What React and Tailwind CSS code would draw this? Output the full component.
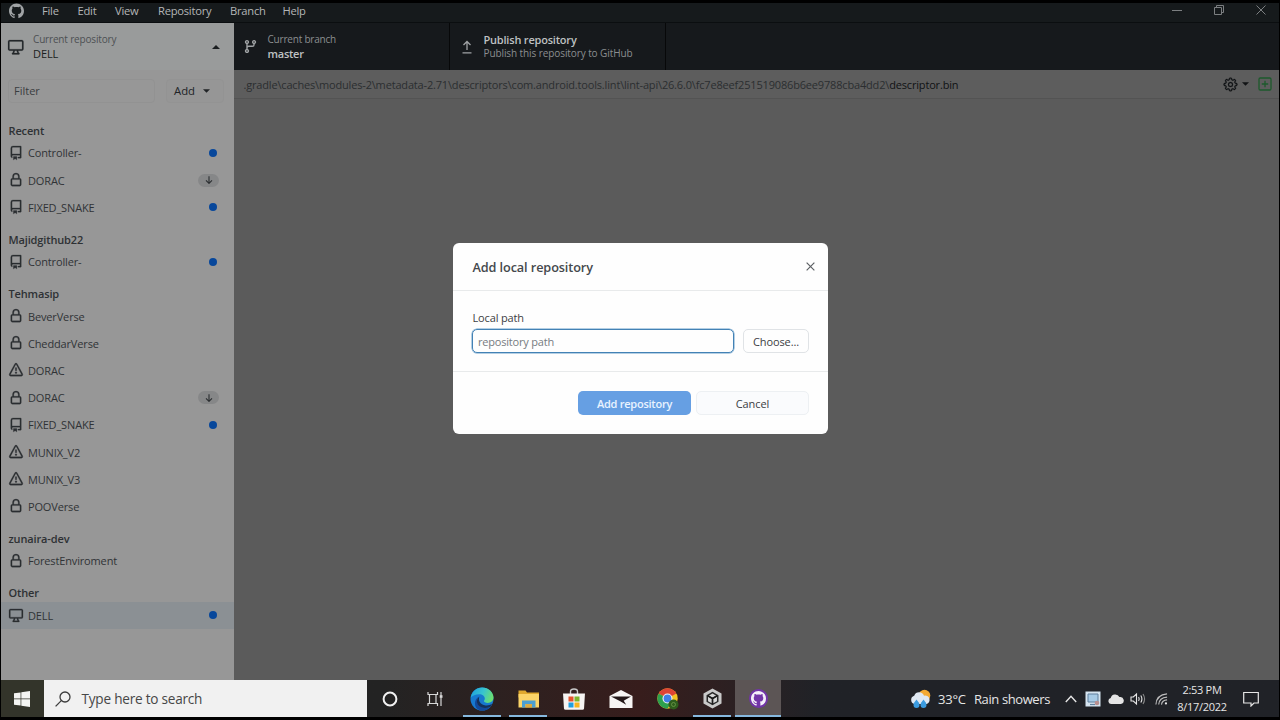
import React from 'react';
import { GoGear } from 'react-icons/go';

const PATHS = {
  desktop:
    'M1.75 2.5h12.5a.25.25 0 01.25.25v7.5a.25.25 0 01-.25.25H1.75a.25.25 0 01-.25-.25v-7.5a.25.25 0 01.25-.25zM14.25 1H1.75A1.75 1.75 0 000 2.75v7.5C0 11.216.784 12 1.75 12h3.727c-.1 1.041-.52 1.872-1.292 2.757A.75.75 0 004.75 16h6.5a.75.75 0 00.565-1.243c-.772-.885-1.193-1.716-1.292-2.757h3.727A1.75 1.75 0 0016 10.25v-7.5A1.75 1.75 0 0014.25 1zM9.018 12H6.982a5.72 5.72 0 01-.765 2.5h3.566a5.72 5.72 0 01-.765-2.5z',
  repo: 'M2 2.5A2.5 2.5 0 014.5 0h8.75a.75.75 0 01.75.75v12.5a.75.75 0 01-.75.75h-2.5a.75.75 0 110-1.5h1.75v-2h-8a1 1 0 00-.714 1.7.75.75 0 01-1.072 1.05A2.495 2.495 0 012 11.5v-9zm10.5-1V9h-8c-.356 0-.694.074-1 .208V2.5a1 1 0 011-1h8zM5 12.25v3.25a.25.25 0 00.4.2l1.45-1.087a.25.25 0 01.3 0L8.6 15.7a.25.25 0 00.4-.2v-3.25a.25.25 0 00-.25-.25h-3.5a.25.25 0 00-.25.25z',
  lock: 'M4 4v2h-.25A1.75 1.75 0 002 7.75v5.5c0 .966.784 1.75 1.75 1.75h8.5A1.75 1.75 0 0014 13.25v-5.5A1.75 1.75 0 0012.25 6H12V4a4 4 0 10-8 0zm6.5 2V4a2.5 2.5 0 10-5 0v2h5zM12 7.5h.25a.25.25 0 01.25.25v5.5a.25.25 0 01-.25.25h-8.5a.25.25 0 01-.25-.25v-5.5a.25.25 0 01.25-.25H12z',
  alert:
    'M8.22 1.754a.25.25 0 00-.44 0L1.698 13.132a.25.25 0 00.22.368h12.164a.25.25 0 00.22-.368L8.22 1.754zm-1.763-.707c.659-1.234 2.427-1.234 3.086 0l6.082 11.378A1.75 1.75 0 0114.082 15H1.918a1.75 1.75 0 01-1.543-2.575L6.457 1.047zM9 11a1 1 0 11-2 0 1 1 0 012 0zm-.25-5.25a.75.75 0 00-1.5 0v2.5a.75.75 0 001.5 0v-2.5z',
  branch:
    'M11.75 2.5a.75.75 0 100 1.5.75.75 0 000-1.5zm-2.25.75a2.25 2.25 0 113 2.122V6A2.5 2.5 0 0110 8.5H6a1 1 0 00-1 1v1.128a2.251 2.251 0 11-1.5 0V5.372a2.25 2.25 0 111.5 0v1.836A2.492 2.492 0 016 7h4a1 1 0 001-1v-.628A2.25 2.25 0 019.5 3.25zM4.25 12a.75.75 0 100 1.5.75.75 0 000-1.5zM3.5 3.25a.75.75 0 111.5 0 .75.75 0 01-1.5 0z',
  github:
    'M8 0C3.58 0 0 3.58 0 8c0 3.54 2.29 6.53 5.47 7.59.4.07.55-.17.55-.38 0-.19-.01-.82-.01-1.49-2.01.37-2.53-.49-2.69-.94-.09-.23-.48-.94-.82-1.13-.28-.15-.68-.52-.01-.53.63-.01 1.08.58 1.23.82.72 1.21 1.87.87 2.33.66.07-.52.28-.87.51-1.07-1.78-.2-3.64-.89-3.64-3.95 0-.87.31-1.59.82-2.15-.08-.2-.36-1.02.08-2.12 0 0 .67-.21 2.2.82.64-.18 1.32-.27 2-.27.68 0 1.36.09 2 .27 1.53-1.04 2.2-.82 2.2-.82.44 1.1.16 1.92.08 2.12.51.56.82 1.27.82 2.15 0 3.07-1.87 3.75-3.65 3.95.29.25.54.73.54 1.48 0 1.07-.01 1.93-.01 2.2 0 .21.15.46.55.38A8.013 8.013 0 0016 8c0-4.42-3.58-8-8-8z',
};

function Icon({ name, className, weight = 0 }) {
  return (
    <svg viewBox="0 0 16 16" fill="currentColor" className={`overflow-visible ${className}`}>
      <path fillRule="evenodd" d={PATHS[name]} stroke="currentColor" strokeWidth={weight} />
    </svg>
  );
}

function Caret({ up, className }) {
  return (
    <svg viewBox="0 0 8 4" fill="currentColor" className={className}>
      <path d={up ? 'M0 4L4 0l4 4z' : 'M0 0h8L4 4z'} />
    </svg>
  );
}

const MENU = [
  ['File', 'w-[35.5px]'],
  ['Edit', 'w-[37.5px]'],
  ['View', 'w-[43px]'],
  ['Repository', 'w-[72px]'],
  ['Branch', 'w-[52.5px]'],
  ['Help', 'w-[40px]'],
];

const ROWS = [
  { label: 'Recent' },
  { name: 'Controller-', icon: 'repo', mark: 'dot' },
  { name: 'DORAC', icon: 'lock', mark: 'pull' },
  { name: 'FIXED_SNAKE', icon: 'repo', mark: 'dot' },
  { label: 'Majidgithub22' },
  { name: 'Controller-', icon: 'repo', mark: 'dot' },
  { label: 'Tehmasip' },
  { name: 'BeverVerse', icon: 'lock' },
  { name: 'CheddarVerse', icon: 'lock' },
  { name: 'DORAC', icon: 'alert' },
  { name: 'DORAC', icon: 'lock', mark: 'pull' },
  { name: 'FIXED_SNAKE', icon: 'repo', mark: 'dot' },
  { name: 'MUNIX_V2', icon: 'alert' },
  { name: 'MUNIX_V3', icon: 'alert' },
  { name: 'POOVerse', icon: 'lock' },
  { label: 'zunaira-dev' },
  { name: 'ForestEnviroment', icon: 'lock' },
  { label: 'Other' },
  { name: 'DELL', icon: 'desktop', mark: 'dot', active: true },
];

function Row({ row }) {
  if (row.label) {
    return (
      <div className="h-[27.2px] pl-[7.5px] pt-[11px] text-[11px] font-semibold leading-4 tracking-[-0.14px] text-[#2e3134]">
        {row.label}
      </div>
    );
  }
  return (
    <div className={`flex h-[27.2px] items-center pl-[7.5px] ${row.active ? 'bg-[#8b9094]' : ''}`}>
      <Icon name={row.icon} weight={0.3} className="size-[14px] shrink-0 text-[#2b2e31]" />
      <span className="ml-[5.5px] flex-1 pt-px text-[11px] leading-4 tracking-[-0.15px] text-[#303336]">{row.name}</span>
      {row.mark === 'dot' && <span className="mr-[17.5px] size-2 rounded-full bg-[#07479b]" />}
      {row.mark === 'pull' && (
        <span className="mr-[15px] flex h-[13px] w-[21px] items-center justify-center rounded-full bg-[#868788]">
          <svg viewBox="0 0 8 8" className="size-2" fill="none" stroke="#2b2e31" strokeWidth="1.1">
            <path d="M4 .2v7M1 4.4l3 3 3-3" />
          </svg>
        </span>
      )}
    </div>
  );
}

function TitleBar() {
  return (
    <div className="flex h-5 shrink-0 items-center border-b border-[#0b0e10] bg-[#161a1c] text-[11.2px] text-[#b4b6b7]">
      <Icon name="github" className="ml-[7.5px] mr-[18.5px] size-[15px] -translate-y-[1.5px] text-[#a0a3a5]" />
      {MENU.map(([label, width]) => (
        <span key={label} className={`${width} mb-[3px] leading-4 tracking-[-0.25px]`}>
          {label}
        </span>
      ))}
      <div className="ml-auto mb-[5px] flex items-center text-[#7c7f81]">
        <svg viewBox="0 0 10 10" className="mr-8 size-[10px]" stroke="currentColor">
          <path d="M0 5.5h10" />
        </svg>
        <svg viewBox="0 0 10 10" className="mr-8 size-[10px]" fill="none" stroke="currentColor">
          <path d="M.5 2.5h7v7h-7zM2.5 2.5v-2h7v7h-2" />
        </svg>
        <svg viewBox="0 0 10 10" className="mr-[13px] size-[10px]" stroke="currentColor">
          <path d="M.5.5l9 9M9.5.5l-9 9" />
        </svg>
      </div>
    </div>
  );
}

function Sidebar() {
  return (
    <aside className="flex w-[233px] shrink-0 flex-col bg-[#979797]">
      <div className="flex h-[47px] shrink-0 items-center bg-[#999b9b] pl-[7px]">
        <Icon name="desktop" weight={0.2} className="size-[15.5px] text-[#24282b]" />
        <div className="ml-[9.5px] flex-1 text-[11px] leading-[15px]">
          <div className="text-[10px] tracking-[-0.17px] text-[#4d5053]">Current repository</div>
          <div className="-mt-px font-medium tracking-[-0.1px] text-[#1b1e20]">DELL</div>
        </div>
        <Caret up className="mr-[14px] h-1 w-2 text-[#1b1e20]" />
      </div>
      <div className="flex h-[42.2px] shrink-0 items-start pl-[7px] pt-[9px]">
        <div className="h-6 w-[147px] rounded border border-[#929292] pl-[5px] text-[11px] leading-[22px] text-[#3a3d40]">
          Filter
        </div>
        <div className="ml-[11px] flex h-6 w-[58px] items-center rounded border border-[#939393] bg-[#969696] pl-[7px] text-[11.3px] text-[#202326]">
          Add
          <Caret className="ml-2 h-1 w-[7px]" />
        </div>
      </div>
      {ROWS.map((row, i) => (
        <Row key={i} row={row} />
      ))}
    </aside>
  );
}

function Main() {
  return (
    <main className="flex min-w-0 flex-1 flex-col bg-[#5b5b5b]">
      <div className="flex h-[47px] shrink-0 bg-[#16191c] text-[11px] leading-[15px]">
        <div className="flex w-[216px] items-center border-r border-[#070809] pl-[9px]">
          <Icon name="branch" className="size-[15px] text-[#a0a3a5]" />
          <div className="ml-[9.5px]">
            <div className="text-[10px] tracking-[-0.2px] text-[#8b8e90]">Current branch</div>
            <div className="-mt-px font-semibold tracking-[-0.25px] text-[#bfc1c2]">master</div>
          </div>
        </div>
        <div className="flex w-[216px] items-center border-r border-[#070809] pl-[12px]">
          <svg viewBox="0 0 10 14" className="h-[14px] w-[10px]" fill="none" stroke="#a0a3a5" strokeWidth="1.3">
            <path d="M5 10V1.5M1.5 5L5 1.5 8.5 5M.5 12.8h9" />
          </svg>
          <div className="ml-[11.5px]">
            <div className="font-semibold tracking-[-0.2px] text-[#bfc1c2]">Publish repository</div>
            <div className="-mt-px text-[10px] tracking-[-0.09px] text-[#8b8e90]">Publish this repository to GitHub</div>
          </div>
        </div>
      </div>
      <div className="flex h-[29px] shrink-0 items-center border-b border-[#535353] bg-[#5d5d5d] pl-[9.5px] text-[11px]">
        <span className="whitespace-nowrap pt-px leading-4 tracking-[-0.17px] text-[#2b2e30]">
          .gradle\caches\modules-2\metadata-2.71\descriptors\com.android.tools.lint\lint-api\26.6.0\fc7e8eef251519086b6ee9788cba4dd2\
          <span className="text-[#101214]">descriptor.bin</span>
        </span>
        <GoGear className="ml-auto size-[15px] text-[#111315]" strokeWidth="0.5" />
        <Caret className="ml-1 h-1 w-[7px] text-[#111315]" />
        <svg viewBox="0 0 14 14" className="ml-[9px] mr-[7px] size-[14px]" fill="none" stroke="#1d5a2c" strokeWidth="1.3">
          <rect x="1" y="1" width="12" height="12" rx="1.2" />
          <path d="M7 3.8v6.4M3.8 7h6.4" />
        </svg>
      </div>
    </main>
  );
}

function Dialog() {
  return (
    <div className="absolute left-[453px] top-[243px] flex h-[191px] w-[375px] flex-col rounded-md bg-[#fefefe] text-[11px] text-[#3c4043]">
      <div className="flex h-12 shrink-0 items-center justify-between border-b border-[#e8eaeb] pl-[19.5px] pr-[13px]">
        <h1 className="pt-0.5 text-[12.7px] font-semibold tracking-[-0.1px] text-[#44484c]">Add local repository</h1>
        <svg viewBox="0 0 10 10" className="size-[9px]" stroke="#5c6064" strokeWidth="1.3">
          <path d="M.7.7l8.6 8.6M9.3.7L.7 9.3" />
        </svg>
      </div>
      <div className="flex h-[81px] shrink-0 flex-col border-b border-[#e8eaeb] pl-[19px] pr-[19px] pt-[19px]">
        <div className="pl-[0.5px] leading-4 tracking-[-0.15px]">Local path</div>
        <div className="mt-[3px] flex justify-between">
          <div className="h-6 w-[262px] rounded-[5px] border-[1.5px] border-[#4382b5] pl-[5px] text-[11px] leading-[23px] tracking-[-0.2px] text-[#777c81] shadow-[0_0_0_0.5px_#6a9fca]">
            repository path
          </div>
          <div className="h-6 w-[66px] rounded-[5px] border border-[#e0e3e6] text-center leading-[23px] tracking-[-0.1px]">
            Choose...
          </div>
        </div>
      </div>
      <div className="flex justify-end gap-[5px] pr-[19px] pt-[19px] text-center">
        <div className="h-[24px] w-[113px] rounded-[5px] bg-[#669fe3] font-semibold leading-[25px] tracking-[-0.25px] text-[#e9f3ff]">
          Add repository
        </div>
        <div className="h-[24px] w-[113px] rounded-[5px] border border-[#edf0f3] bg-[#fafbfd] leading-[24px] tracking-[-0.1px]">
          Cancel
        </div>
      </div>
    </div>
  );
}

function Slot({ open, active, children }) {
  return (
    <div className={`flex h-full w-[46px] flex-col items-center ${active ? 'bg-[#5c5555]' : ''}`}>
      <div className="flex w-full flex-1 items-center justify-center pt-0.5">{children}</div>
      <div className={`h-0.5 ${active ? 'w-full' : 'w-[38px]'} ${open ? 'bg-[#86b9df]' : ''}`} />
    </div>
  );
}

function Taskbar() {
  return (
    <footer className="flex h-[37px] shrink-0 items-center bg-linear-to-r from-[#232323] from-30% via-[#371d1c] via-50% to-[#202227] to-64%">
      <div className="flex h-full w-[43px] items-center justify-center bg-[#33342a]">
        <svg viewBox="0 0 16 16" className="mr-0.5 size-[16px]" fill="#f4f4f2">
          <path d="M0 2.3l6.6-.9v6.2H0zM7.3 1.3L16 .1v7.5H7.3zM0 8.3h6.6v6.3L0 13.7zM7.3 8.3H16v7.6l-8.7-1.2z" />
        </svg>
      </div>
      <div className="flex h-full w-[323px] items-center bg-[#f1f1f1]">
        <svg viewBox="0 0 16 16" className="ml-[11px] size-[16px]" fill="none" stroke="#3c3c3c" strokeWidth="1.3">
          <circle cx="10" cy="6" r="5" />
          <path d="M6.3 9.6L.6 15.4" />
        </svg>
        <span className="ml-[10.5px] pt-0.5 text-[13.6px] tracking-[-0.23px] text-[#474747]">Type here to search</span>
      </div>
      <Slot>
        <svg viewBox="0 0 16 16" className="size-[16px]" fill="none" stroke="#f1f1f1" strokeWidth="2">
          <circle cx="8" cy="8" r="6.4" />
        </svg>
      </Slot>
      <Slot>
        <svg viewBox="0 0 16 16" className="size-[16px] -translate-x-px" fill="none" stroke="#d8d8d8" strokeWidth="1.2">
          <path d="M1 1v2.5h9.5V1M1 15v-2.5h9.5V15M2.5 3.5v9M9 3.5v9M14 1v14" />
          <path d="M12.7 5.5h2.8" strokeWidth="2.6" />
        </svg>
      </Slot>
      <Slot open>
        <svg viewBox="0 0 24 24" className="size-6">
          <defs>
            <linearGradient id="edgeTop" x1="0" y1="0.3" x2="1" y2="0.6">
              <stop offset="0" stopColor="#1fa3dc" />
              <stop offset="0.5" stopColor="#38c4cf" />
              <stop offset="1" stopColor="#6ee06a" />
            </linearGradient>
          </defs>
          <circle cx="12" cy="12" r="11.5" fill="#1779cf" />
          <path d="M.8 10.5C1.8 4.5 6.5.5 12.2.5 18.5.5 23.5 5 23.5 10.6c0 3.300-2.700 5.300-5.700 5.300-2.300 0-3.900-.9-3.900-1.800 0-.7.9-1 .9-2.600 0-2.300-2.300-4.300-5.600-4.300-3.800 0-6.700 1.500-8.400 3.300z" fill="url(#edgeTop)" />
          <path d="M9 9.5c-2 2-2.5 5.2-.8 8 2.2 3.4 7.1 4.6 12.3 2.2-2.6 3.3-6.8 4.5-10.7 3.6C4 21.5 3 13 9 9.500z" fill="#12499c" />
          <path d="M9.5 9.6c-1.7 3.4.4 8.3 6.2 8.9 2.5.2 4.6-.4 6.5-1.4l-1.7 2.6c-5.2 2.4-10.5 1.2-12.7-2.2-1.7-2.8-.7-6.4 1.7-7.900z" fill="#15305a" />
        </svg>
      </Slot>
      <Slot open>
        <svg viewBox="0 0 22 18" className="ml-0.5 h-[18px] w-[22px]">
          <path d="M.5.5h7l1.5 2h12v5H.5z" fill="#e0a92e" />
          <path d="M.5 4h20.5v13.5H.5z" fill="#fbd468" />
          <path d="M4 17.5V10.5h13.5v7h-3.5v-3.5h-6.5v3.5z" fill="#4c9fd1" />
          <path d="M7.5 14h6.5v3.5H7.5z" fill="#dca93f" />
        </svg>
      </Slot>
      <Slot>
        <svg viewBox="0 0 22 22" className="size-[22px]">
          <path d="M7.5 6V3.6Q7.5 1 11 1t3.5 2.6V6" fill="none" stroke="#c9c9c9" strokeWidth="1.4" />
          <path d="M0 5.5h22l-1 15q-.1 1.3-1.5 1.3h-17Q1.1 21.8 1 20.5z" fill="#f6f4f2" />
          <path d="M5.5 8.5h5v5h-5z" fill="#e5532d" />
          <path d="M11.5 8.5h5v5h-5z" fill="#7db62c" />
          <path d="M5.5 14.5h5v5h-5z" fill="#1f9fe0" />
          <path d="M11.5 14.5h5v5h-5z" fill="#f7b51f" />
        </svg>
      </Slot>
      <Slot>
        <svg viewBox="0 0 24 18" className="ml-0.5 h-[18px] w-6">
          <path d="M.5 6L12 0l11.5 6v12H.5z" fill="#f7f5f4" />
          <path d="M2 6.5h20l-7.3 4.2 2.5 4-6-3.4z" fill="#241819" />
        </svg>
      </Slot>
      <Slot>
        <svg viewBox="0 0 22 22" className="ml-[3px] size-[22px]">
          <circle cx="10.5" cy="10.5" r="10.2" fill="#f3c324" />
          <path d="M10.5 10.5L1.7 5.4A10.2 10.2 0 0119.3 5.400z" fill="#dd4435" />
          <path d="M1.7 5.4A10.2 10.2 0 0010.5 20.7l4.6-8L10.5 15z" fill="#2da04e" />
          <path d="M1.7 5.4l5 8.5 3.8-3.4z" fill="#2da04e" />
          <circle cx="10.5" cy="10.5" r="5" fill="#f4f4f4" />
          <circle cx="10.5" cy="10.5" r="3.9" fill="#3f7fe6" />
          <circle cx="16.5" cy="16.5" r="5" fill="#2f5d1c" />
          <circle cx="16.5" cy="16.5" r="2" fill="none" stroke="#6f9a4c" strokeWidth="0.8" />
        </svg>
      </Slot>
      <Slot open>
        <svg viewBox="0 0 20 22" className="ml-px h-[21px] w-[19px]">
          <path d="M10 .5l9.5 5.3v10.4L10 21.5.5 16.2V5.8z" fill="#c9c9c9" />
          <path d="M10 4l6.3 3.5v7L10 18l-6.3-3.5v-7z" fill="#2a2a2a" />
          <path d="M10 5.7l4 2.3-4 2.3L6 8zM5.3 9.2l4 2.3v4.6l-4-2.3zM14.7 9.2l-4 2.3v4.6l4-2.3z" fill="#d8d8d8" />
          <path d="M10 11v6M10 11l5-3M10 11L5 8" stroke="#1c1c1c" strokeWidth="1.6" />
        </svg>
      </Slot>
      <Slot open active>
        <span className="ml-px flex size-[19px] items-center justify-center rounded-full bg-[#7235a8]">
          <Icon name="github" className="size-[15px] text-[#f4effa]" />
        </span>
      </Slot>
      <div className="ml-auto flex h-full items-center pt-px text-[#e6e6e6]">
        <svg viewBox="0 0 22 20" className="h-5 w-[22px]">
          <circle cx="14.5" cy="6.5" r="5.8" fill="#f4a932" />
          <path d="M4.5 15a4.3 4.3 0 01-.3-8.3A5.2 5.2 0 0114 6.8a4.2 4.2 0 012.6 8.2z" fill="#dfe8f2" />
          <path d="M6.5 10.5q-3 3.3-3 5.5a3 3 0 006 0q0-2.2-3-5.5zM13.5 10.5q-3 3.3-3 5.5a3 3 0 006 0q0-2.2-3-5.5z" fill="#3a9be0" />
        </svg>
        <span className="ml-[6.5px] w-[36px] whitespace-nowrap pt-px text-[13px] tracking-[-0.2px]">33°C</span>
        <span className="w-[90.5px] whitespace-nowrap pt-px text-[13px] tracking-[-0.4px]">Rain showers</span>
        <svg viewBox="0 0 12 8" className="h-2 w-3" fill="none" stroke="currentColor" strokeWidth="1.4">
          <path d="M.8 7L6 1.3 11.2 7" />
        </svg>
        <svg viewBox="0 0 16 16" className="ml-[8.5px] size-[16px]">
          <path d="M.5.5h15v15H.5z" fill="#d5e4f0" />
          <path d="M3 3h10v8H3z" fill="#a7cbe6" stroke="#5e7f9c" />
          <path d="M5 13.5h5" stroke="#5e7f9c" strokeWidth="1.2" />
          <circle cx="12" cy="12" r="2.3" fill="#b98f8f" />
        </svg>
        <svg viewBox="0 0 16 10" className="ml-[7px] h-[10px] w-4" fill="#e4e4e4">
          <path d="M3 10a3 3 0 01-.3-5.9 4.6 4.6 0 018.7-1A3.5 3.5 0 0113 10z" />
        </svg>
        <svg viewBox="0 0 16 14" className="ml-[6px] h-[14px] w-4" fill="none" stroke="currentColor" strokeWidth="1.1">
          <path d="M1 5v4h2.3l3.2 3V2L3.3 5zM8.6 5q1.2 2 0 4M10.8 3.5q2.200 3.500 0 7" />
          <path d="M13 2q3.2 5 0 10" stroke="#8a8a8a" />
        </svg>
        <svg viewBox="0 0 14 14" className="ml-[9px] h-[14px] w-[13px]" fill="none" stroke="#bdbdbd" strokeWidth="1.2">
          <path d="M1 13Q1.5 2.5 13 1.5M4 13q.5-7.5 9-8M7 13q.5-4.7 6-5" />
          <circle cx="11.8" cy="11.8" r="1.2" fill="#e6e6e6" stroke="none" />
        </svg>
        <div className="-mt-[3px] ml-[6px] flex w-[56px] flex-col items-center whitespace-nowrap text-[11px] leading-[17px] tracking-[-0.3px]">
          <span>2:53 PM</span>
          <span>8/17/2022</span>
        </div>
        <svg viewBox="0 0 16 16" className="ml-[13px] mr-[20px] size-[16px]" fill="none" stroke="currentColor" strokeWidth="1.2">
          <path d="M.7 1.500h14.600v10.500h-4.300l-3 3v-3H.7z" />
        </svg>
      </div>
    </footer>
  );
}

export default function App() {
  return (
    <div className="relative flex h-[720px] w-[1280px] flex-col overflow-hidden bg-black px-px pb-[3px] pt-[3px] font-['Open_Sans','Noto_Sans',sans-serif]">
      <TitleBar />
      <div className="flex min-h-0 flex-1">
        <Sidebar />
        <Main />
      </div>
      <Taskbar />
      <Dialog />
    </div>
  );
}
